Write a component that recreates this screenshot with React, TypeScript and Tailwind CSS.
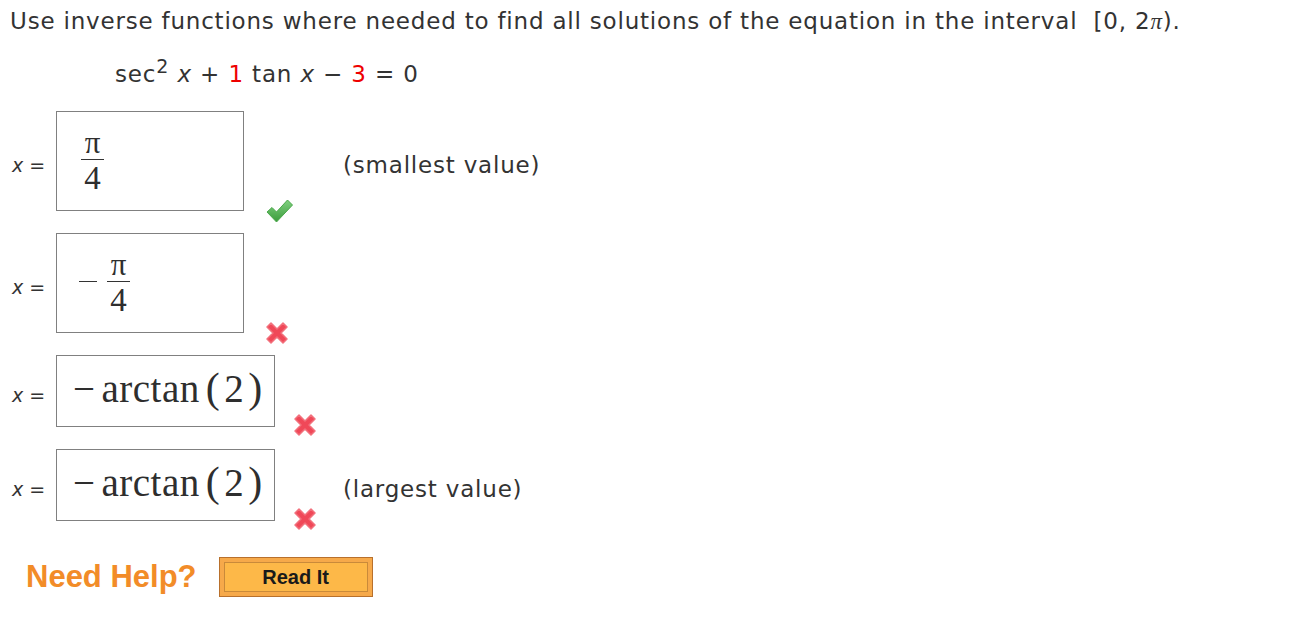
const sans = "font-['DejaVu_Sans','Verdana',sans-serif]";
const serif = "font-['Liberation_Serif','DejaVu_Serif',serif]";

const Check = () => (
    <svg width="30" height="27" viewBox="0 0 30 27">
        <defs>
            <linearGradient id="g" x1="0" y1="0" x2="0" y2="1">
                <stop offset="0" stopColor="#80d080" />
                <stop offset="1" stopColor="#3c9c3c" />
            </linearGradient>
        </defs>
        <path d="M3 15 L8 10.5 L12.5 15 L23.5 3 L28.5 8 L12.5 25 Z" fill="url(#g)" stroke="#4aa84a" strokeWidth="1" strokeLinejoin="round" />
    </svg>
);

const Cross = () => (
    <svg width="26" height="26" viewBox="0 0 26 26">
        <path
            d="M3 7 L7 3 L13 9 L19 3 L23 7 L17 13 L23 19 L19 23 L13 17 L7 23 L3 19 L9 13 Z"
            fill="#f04858"
            stroke="#f2707c"
            strokeWidth="1.5"
            strokeLinejoin="round"
        />
    </svg>
);

const Frac = ({ neg }: { neg?: boolean }) => (
    <div className={`flex items-center gap-[10px] ${neg ? "pl-[22px]" : "pl-[24px]"} ${serif} text-[#2e2e2e]`}>
        {neg && <span className="w-[18px] h-[1px] bg-[#333] mt-[-4px]" />}
        <div className="flex flex-col items-center w-[23px]">
            <span className="text-[31px] leading-[33px]">π</span>
            <span className="w-full h-[1px] bg-[#333]" />
            <span className="text-[33px] leading-[36px]">4</span>
        </div>
    </div>
);

const Arctan = () => (
    <div className={`pl-[16px] pb-[6px] ${serif} text-[39px] leading-none tracking-[0.5px] text-[#2e2e2e] flex items-center`}>
        <span className="mr-[6px]">−</span>arctan<span className="text-[42px] ml-[6px] mr-[4px]">(</span>2<span className="text-[42px] ml-[4px]">)</span>
    </div>
);

type RowProps = {
    wide?: boolean;
    ok?: boolean;
    note?: string;
    children: React.ReactNode;
};

const Row = ({ wide, ok, note, children }: RowProps) => (
    <div className="flex items-center">
        <div className={`w-[56px] pl-[12px] pt-[8px] text-[19px] text-[#333] ${sans}`}>
            <i>x</i> =
        </div>
        <div className="flex items-end w-[287px]">
            <div className={`border border-[#808080] flex items-center ${wide ? "w-[219px] h-[72px]" : "w-[188px] h-[100px]"}`}>
                {children}
            </div>
            <div className={`${wide ? "ml-[17px] mb-[-11px]" : "ml-[20px] mb-[-13px]"}`}>
                {ok ? <Check /> : <Cross />}
            </div>
        </div>
        {note && <div className={`text-[23px] tracking-[0.8px] pt-[8px] text-[#333] ${sans}`}>{note}</div>}
    </div>
);

export default function App() {
    return (
        <div className={`bg-white w-[1293px] h-[626px] ${sans} text-[#333]`}>
            <div className="pl-[10px] pt-[6px] text-[23px] tracking-[0.8px] leading-[30px]">
                Use inverse functions where needed to find all solutions of the equation in the interval&nbsp;&nbsp;[0, 2<i className={serif}>π</i>).
            </div>
            <div className="pl-[115px] pt-[22px] text-[23px] tracking-[0.85px] leading-[30px]">
                sec<sup className="text-[19px] relative top-[-9px]">2</sup> <i>x</i> + <span className="text-[#e00]">1</span> tan <i>x</i> − <span className="text-[#e00]">3</span> = 0
            </div>
            <div className="flex flex-col gap-[22px] pt-[22px]">
                <Row ok note="(smallest value)">
                    <Frac />
                </Row>
                <Row>
                    <Frac neg />
                </Row>
                <Row wide>
                    <Arctan />
                </Row>
                <Row wide note="(largest value)">
                    <Arctan />
                </Row>
            </div>
            <div className="flex items-center pl-[26px] pt-[33px]">
                <span className="font-['Liberation_Sans',Arial,sans-serif] font-bold text-[31px] text-[#f28c28]">Need Help?</span>
                <div className="ml-[22px] w-[154px] h-[40px] border border-[#b8702c] bg-[#f6a94a] p-[4px]">
                    <div className="h-full border border-[#c98a3a] bg-[#fdb848] flex items-center justify-center font-['Liberation_Sans',Arial,sans-serif] font-bold text-[20px] text-[#1a1a1a]">
                        Read It
                    </div>
                </div>
            </div>
        </div>
    );
}
